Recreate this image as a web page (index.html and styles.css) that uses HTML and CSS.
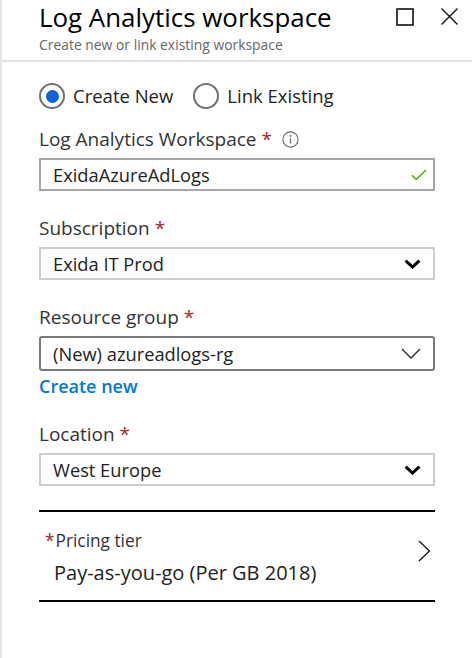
FILE: index.html
```html
<!DOCTYPE html>
<html lang="en">
<head>
<meta charset="utf-8">
<title>Log Analytics workspace</title>
<link rel="stylesheet" href="styles.css">
</head>
<body>
<div class="panel">
  <header class="head">
    <div class="titles">
      <h1 class="title">Log Analytics workspace</h1>
      <div class="subtitle">Create new or link existing workspace</div>
    </div>
    <div class="actions">
      <svg class="icon-max" width="18" height="18" viewBox="0 0 18 18"><rect x="1" y="1" width="16" height="16" fill="none" stroke="#111" stroke-width="1.6"/></svg>
      <svg class="icon-close" width="19" height="19" viewBox="0 0 19 19"><path d="M1.5 1.5L17.5 17.5M17.5 1.5L1.5 17.5" stroke="#111" stroke-width="1.4" fill="none"/></svg>
    </div>
  </header>
  <main class="body">
    <div class="radios">
      <label class="radio"><span class="radio-circle checked"><span class="radio-dot"></span></span><span class="radio-text">Create New</span></label>
      <label class="radio"><span class="radio-circle"></span><span class="radio-text">Link Existing</span></label>
    </div>

    <div class="field first">
      <div class="label">Log Analytics Workspace <span class="req">*</span>
        <svg class="info" width="17" height="17" viewBox="0 0 17 17"><circle cx="8.5" cy="8.5" r="7.6" fill="none" stroke="#666" stroke-width="1.1"/><circle cx="8.5" cy="4.9" r="0.9" fill="#666"/><path d="M8.5 7.2V12.6" stroke="#666" stroke-width="1.2"/></svg>
      </div>
      <div class="box input">
        <span class="value">ExidaAzureAdLogs</span>
        <svg class="check" width="16" height="12" viewBox="0 0 16 12"><path d="M1 6.2L5.2 10.4L15 1" fill="none" stroke="#5ba300" stroke-width="1.4"/></svg>
      </div>
    </div>

    <div class="field">
      <div class="label">Subscription <span class="req">*</span></div>
      <div class="box select">
        <span class="value">Exida IT Prod</span>
        <svg class="chev-bold" width="17" height="10" viewBox="0 0 17 10"><path d="M1.6 1.6L8.5 8L15.4 1.6" fill="none" stroke="#000" stroke-width="3"/></svg>
      </div>
    </div>

    <div class="field">
      <div class="label">Resource group <span class="req">*</span></div>
      <div class="box select active">
        <span class="value">(New) azureadlogs-rg</span>
        <svg class="chev-thin" width="20" height="11" viewBox="0 0 20 11"><path d="M1 1L10 10L19 1" fill="none" stroke="#222" stroke-width="1.3"/></svg>
      </div>
      <a class="link" href="#">Create new</a>
    </div>

    <div class="field loc">
      <div class="label">Location <span class="req">*</span></div>
      <div class="box select">
        <span class="value">West Europe</span>
        <svg class="chev-bold" width="17" height="10" viewBox="0 0 17 10"><path d="M1.6 1.6L8.5 8L15.4 1.6" fill="none" stroke="#000" stroke-width="3"/></svg>
      </div>
    </div>

    <div class="tier">
      <div class="tier-text">
        <div class="tier-label"><span class="req">*</span>Pricing tier</div>
        <div class="tier-value">Pay-as-you-go (Per GB 2018)</div>
      </div>
      <svg class="chev-right" width="13" height="22" viewBox="0 0 13 22"><path d="M1 1L11.5 11L1 21" fill="none" stroke="#111" stroke-width="1.3"/></svg>
    </div>
  </main>
</div>
</body>
</html>
```

FILE: styles.css
```css
* { box-sizing: border-box; }
html, body { margin: 0; padding: 0; background: #fff; }
body {
  font-family: "Open Sans", "Noto Sans", sans-serif;
  color: #212121;
}
.panel {
  width: 472px;
  min-height: 658px;
  border-left: 2px solid #e4e4e4;
  background: #fff;
}
.head {
  height: 62px;
  padding: 0 0 0 37px;
  border-bottom: 2px solid #e0e0e0;
  display: flex;
  justify-content: space-between;
  align-items: flex-start;
}
.title {
  margin: 0;
  font-size: 25.9px;
  line-height: 35.6px;
  font-weight: 400;
  color: #000;
}
.subtitle {
  margin-top: 0.2px;
  font-size: 13.9px;
  line-height: 18px;
  color: #666;
}
.actions {
  display: flex;
  align-items: center;
  gap: 26px;
  padding-top: 7px;
  padding-right: 13px;
}
.body {
  padding: 0 37px;
}
.radios {
  display: flex;
  gap: 20px;
  margin-top: 21px;
  height: 26px;
  align-items: center;
}
.radio {
  display: flex;
  align-items: center;
  gap: 8px;
  font-size: 18.5px;
  line-height: 24px;
  color: #222;
}
.radio-circle {
  width: 26px;
  height: 26px;
  border: 2px solid #717171;
  border-radius: 50%;
  display: flex;
  align-items: center;
  justify-content: center;
}
.radio-dot {
  width: 13px;
  height: 13px;
  border-radius: 50%;
  background: #0f62d8;
}
.field { margin-top: 25px; }
.field.first { margin-top: 18px; }
.field.loc { margin-top: 24px; }
.label {
  font-size: 19px;
  line-height: 24px;
  color: #333;
  display: flex;
  align-items: center;
  white-space: pre;
}
.req { color: #a4262c; }
.info { margin-left: 10px; }
.box {
  margin-top: 7px;
  height: 33px;
  border: 2px solid #cdcdcd;
  display: flex;
  align-items: center;
  justify-content: space-between;
  padding: 0 12px;
  font-size: 18.3px;
  color: #222;
}
.box.input { border-color: #a6a6a6; }
.box.active { border-color: #7a7a7a; border-radius: 3px; height: 35px; }
.value { line-height: 24px; }
.check { margin-right: -6px; }
.link {
  display: block;
  margin-top: 3px;
  font-size: 18px;
  line-height: 24px;
  color: #0078d4;
  font-weight: 600;
  text-decoration: none;
}
.tier {
  margin-top: 24px;
  border-top: 2px solid #000;
  border-bottom: 2px solid #000;
  height: 92px;
  display: flex;
  align-items: center;
  justify-content: space-between;
  padding: 0 4px 0 6px;
}
.tier-text { padding-top: 2px; }
.tier-label {
  font-size: 17.3px;
  line-height: 22px;
  color: #333;
}
.tier-label .req { margin-right: 1px; }
.tier-value {
  margin-top: 9px;
  padding-left: 9px;
  font-size: 20px;
  line-height: 24px;
  color: #222;
}
.chev-right { margin-top: -10px; }
```
